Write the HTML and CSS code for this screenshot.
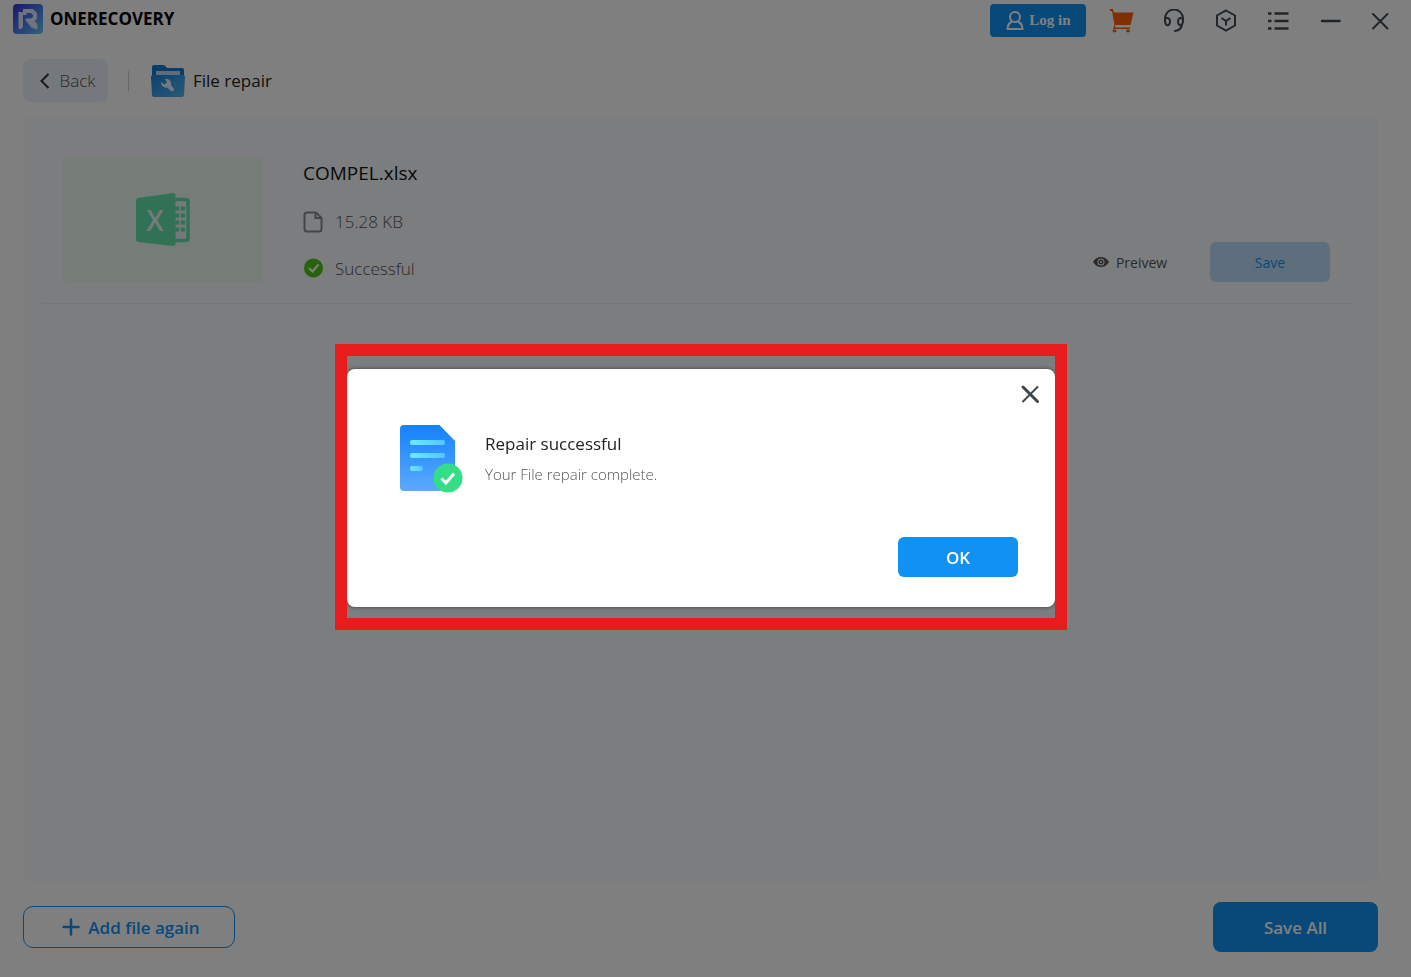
FILE: index.html
```html
<!DOCTYPE html>
<html lang="en">
<head>
  <meta charset="UTF-8">
  <title>OneRecovery - File repair</title>
  <meta name="viewport" content="width=device-width, initial-scale=1.0">
  <link rel="stylesheet" href="styles.css">
</head>
<body>

<div class="app">
  <header class="titlebar">
    <div class="brand">
      <svg class="brand-logo" viewBox="0 0 30 30" aria-hidden="true">
        <defs>
          <linearGradient id="logoBg" x1="0" y1="0" x2="1" y2="1">
            <stop offset="0" stop-color="#3230d8"/>
            <stop offset="0.5" stop-color="#4a7af0"/>
            <stop offset="1" stop-color="#5fc8f0"/>
          </linearGradient>
        </defs>
        <rect width="30" height="30" rx="4" fill="url(#logoBg)"/>
        <path d="M5.500 8 H10 V23 L7.500 25.500 L5.500 24 Z" fill="#dfe6fb"/>
        <path d="M10 5 H20 L24 9 V15 L21.500 17 L24.500 20 V25.500 L19 24 L12.500 16.500 V14.500 H18 L20 13 V11 L18 9 H13.500 V11 H10 Z" fill="#dfe6fb"/>
      </svg>
      <span class="brand-name">ONERECOVERY</span>
    </div>

    <div class="tools">
      <button class="login" type="button">
        <svg class="login-icon" viewBox="0 0 20 22" fill="none" stroke="#fff" stroke-width="2" aria-hidden="true">
          <circle cx="10" cy="7" r="5"/>
          <path d="M7 11.500 C4 13 2.500 16 2.500 19 H17.500 C17.500 16 16 13 13 11.500"/>
        </svg>
        Log in
      </button>
      <button class="icon-btn" type="button" aria-label="Buy">
        <svg viewBox="0 0 24 24" fill="#ff6000">
          <path d="M0 0 H3 L4 3.500 H23.500 L20.500 16 H5.500 L5 18.500 H20 V20 H3 L4.500 16 L2 2 H0 Z"/>
          <ellipse cx="4.500" cy="22" rx="2" ry="1.400"/>
          <ellipse cx="18" cy="22" rx="2" ry="1.400"/>
        </svg>
      </button>
      <button class="icon-btn" type="button" aria-label="Support">
        <svg viewBox="0 0 24 24" fill="none" stroke="#414b54" stroke-width="2" stroke-linecap="round">
          <path d="M3 12 V9.500 A9 9 0 0 1 21 9.500 V12"/>
          <path d="M3 10 C6 8 8 9.500 8 12.500 S6 17 4.500 16 C3 15 3 13 3 10 Z"/>
          <path d="M21 10 C18 8 16 9.500 16 12.500 S18 17 19.500 16 C21 15 21 13 21 10 Z"/>
          <path d="M20 15.500 C19.500 19 17 21.500 13 22"/>
        </svg>
      </button>
      <button class="icon-btn" type="button" aria-label="Products">
        <svg viewBox="0 0 24 24" fill="none" stroke="#414b54" stroke-width="2">
          <path d="M12 1.500 L21 6.500 V16.500 L12 21.500 L3 16.500 V6.500 Z"/>
          <path d="M7.500 9 L12 12 L16.500 9 M12 12 V16.500"/>
        </svg>
      </button>
      <button class="icon-btn" type="button" aria-label="Menu">
        <svg viewBox="0 0 24 24" fill="none" stroke="#414b54" stroke-width="2.500">
          <path d="M2 4.500 H5.500 M8.500 4.500 H22.500 M2 12 H5.500 M8.500 12 H22.500 M2 19.500 H5.500 M8.500 19.500 H22.500"/>
        </svg>
      </button>
      <button class="icon-btn" type="button" aria-label="Minimize">
        <svg viewBox="0 0 24 24" fill="none" stroke="#414b54" stroke-width="2.500" stroke-linecap="round">
          <path d="M4 12 H21.500"/>
        </svg>
      </button>
      <button class="icon-btn close" type="button" aria-label="Close">
        <svg viewBox="0 0 24 24" fill="none" stroke="#414b54" stroke-width="2" stroke-linecap="round">
          <path d="M5 5 L19.500 19.500 M19.500 5 L5 19.500"/>
        </svg>
      </button>
    </div>
  </header>

  <nav class="crumbs">
    <button class="back" type="button">
      <svg class="back-icon" viewBox="0 0 10 16" fill="none" stroke="#333" stroke-width="2" aria-hidden="true">
        <path d="M8.500 1 L1.500 8 L8.500 15"/>
      </svg>
      Back
    </button>
    <span class="divider"></span>
    <svg class="folder" viewBox="0 0 34 32" aria-hidden="true">
      <defs>
        <linearGradient id="folderBg" x1="0" y1="0" x2="1" y2="1">
          <stop offset="0" stop-color="#1c82d8"/>
          <stop offset="1" stop-color="#52b8f0"/>
        </linearGradient>
      </defs>
      <path d="M1 2 Q1 0 3 0 H12 Q14 0 15 2 L16 3 H31 Q33 3 33 5 V12 H1 Z" fill="#1478c8"/>
      <rect x="5" y="6" width="24" height="5" fill="#b8dcfa"/>
      <path d="M0 12 Q0 10 2 10 H32 Q34 10 34 12 L33 30 Q33 32 31 32 H3 Q1 32 1 30 Z" fill="url(#folderBg)"/>
      <path d="M14 14 A5 5 0 0 1 20 20 L23 24 Q23 27 20 26 L16 22.500 A5 5 0 0 1 10 17 L13.500 19.500 L16 17.500 Z" fill="#e6f3fe"/>
    </svg>
    <h1 class="page-title">File repair</h1>
  </nav>

  <main class="panel">
    <article class="file">
      <div class="thumb">
        <svg class="xls" viewBox="0 0 54 54" aria-hidden="true">
          <rect x="30" y="6.500" width="22" height="41" rx="2" fill="#ecf3f2" stroke="#62e3ab" stroke-width="3.500"/>
          <path d="M39 15.500 H49 M39 22.500 H49 M39 29.500 H49 M39 36.500 H49" stroke="#62e3ab" stroke-width="4"/>
          <path d="M44 9 V45" stroke="#ecf3f2" stroke-width="1.500"/>
          <path d="M2 5 L37 0 Q39.500 0 39.500 2 V51 Q39.500 53 37 53 L2 49 Q0 48.500 0 46.500 V7.500 Q0 5.500 2 5 Z" fill="#62e3ab"/>
          <text x="19" y="38" class="xls-letter">X</text>
        </svg>
      </div>
      <div class="info">
        <h2 class="file-name">COMPEL.xlsx</h2>
        <p class="meta">
          <svg class="meta-icon" viewBox="0 0 20 22" fill="none" stroke="#8a8a8a" stroke-width="2" aria-hidden="true">
            <path d="M4 1.500 H13 L18.500 7 V18 Q18.500 20.500 16 20.500 H4 Q1.500 20.500 1.500 18 V4 Q1.500 1.500 4 1.500 Z"/>
            <path d="M12.500 1.500 V7 H18.500"/>
          </svg>
          15.28 KB
        </p>
        <p class="meta">
          <svg class="meta-icon" viewBox="0 0 20 22" aria-hidden="true">
            <circle cx="10.500" cy="10" r="9.500" fill="#52c41a"/>
            <path d="M6 10 L9.500 13.500 L15.500 6.500" fill="none" stroke="#fff" stroke-width="2"/>
          </svg>
          Successful
        </p>
      </div>
      <div class="actions">
        <button class="preview" type="button">
          <svg class="eye" viewBox="0 0 16 12" aria-hidden="true">
            <path d="M0 6 Q3 1 8 1 T16 6 Q13 11 8 11 T0 6 Z" fill="#555"/>
            <circle cx="8" cy="6" r="3.500" fill="#fff"/>
            <circle cx="8" cy="6" r="2.500" fill="#555"/>
            <circle cx="8" cy="6" r="1" fill="#fff"/>
          </svg>
          Preivew
        </button>
        <button class="save" type="button">Save</button>
      </div>
    </article>
  </main>

  <footer class="footer">
    <button class="add" type="button">
      <svg class="plus" viewBox="0 0 18 18" stroke="#1192f3" stroke-width="2.500" stroke-linecap="round" aria-hidden="true">
        <path d="M9 1.500 V16.500 M1.500 9 H16.500"/>
      </svg>
      Add file again
    </button>
    <button class="save-all" type="button">Save All</button>
  </footer>
</div>

<!-- Result dialog over the dimmed window -->
<div class="overlay">
  <div class="frame">
    <section class="dialog" role="dialog" aria-labelledby="dialog-title">
      <button class="dialog-close" type="button" aria-label="Close">
        <svg viewBox="0 0 20 20" fill="none" stroke="#3d464d" stroke-linecap="round">
          <path d="M3 3 L17.500 17.500" stroke-width="3"/>
          <path d="M17.500 3 L3 17.500" stroke-width="2"/>
        </svg>
      </button>
      <div class="dialog-body">
        <svg class="doc" viewBox="0 0 63 68" aria-hidden="true">
          <defs>
            <linearGradient id="docBg" x1="0" y1="0" x2="0" y2="1">
              <stop offset="0" stop-color="#1482fc"/>
              <stop offset="1" stop-color="#5ca9fd"/>
            </linearGradient>
            <linearGradient id="lineBg" x1="0" y1="0" x2="1" y2="0">
              <stop offset="0" stop-color="#6cecff"/>
              <stop offset="1" stop-color="#55c4ff"/>
            </linearGradient>
          </defs>
          <path d="M4 0 H39.500 L55 16 V62 Q55 66 51 66 H4 Q0 66 0 62 V4 Q0 0 4 0 Z" fill="url(#docBg)"/>
          <g fill="url(#lineBg)">
            <rect x="10" y="15" width="35" height="5" rx="2"/>
            <rect x="10" y="28" width="35" height="5" rx="2"/>
            <rect x="10" y="41" width="13" height="5" rx="2"/>
          </g>
          <circle cx="48" cy="53" r="14.500" fill="#33de86"/>
          <path d="M41.500 53.500 L46 58 L54 48.500" fill="none" stroke="#fff" stroke-width="3"/>
        </svg>
        <div class="dialog-text">
          <h2 class="dialog-title" id="dialog-title">Repair successful</h2>
          <p class="dialog-note">Your File repair complete.</p>
        </div>
      </div>
      <button class="ok" type="button">OK</button>
    </section>
  </div>
</div>

</body>
</html>
```
FILE: styles.css
```css
* {
  box-sizing: border-box;
  margin: 0;
  padding: 0;
}
body {
  font-family: "Open Sans", "Noto Sans", sans-serif;
  background: #fff;
  color: #222;
}
button {
  font-family: inherit;
  border: none;
  background: none;
  cursor: pointer;
}
svg {
  display: block;
  flex: none;
}

.app {
  min-height: 100vh;
  display: flex;
  flex-direction: column;
}

/* title bar */
.titlebar {
  display: flex;
  justify-content: space-between;
  align-items: flex-start;
  padding: 4px 19px 0 13px;
}
.brand {
  display: flex;
  align-items: center;
  gap: 7px;
}
.brand-logo {
  width: 30px;
  height: 30px;
}
.brand-name {
  font-size: 17px;
  font-weight: 700;
  line-height: 30px;
  color: #000;
}
.tools {
  display: flex;
  align-items: center;
  gap: 28px;
}
.login {
  display: flex;
  align-items: center;
  justify-content: center;
  gap: 4px;
  width: 96px;
  height: 33px;
  margin-right: -4px;
  border-radius: 4px;
  background: #1192f3;
  color: #fff;
  font-family: "Liberation Serif", serif;
  font-size: 15px;
  font-weight: 700;
}
.login-icon {
  width: 20px;
  height: 22px;
}
.icon-btn {
  width: 24px;
  height: 24px;
}
.close {
  margin-left: -2px;
}

/* back + page title */
.crumbs {
  display: flex;
  align-items: center;
  margin-top: 22px;
  padding: 0 33px 0 23px;
}
.back {
  display: flex;
  align-items: center;
  justify-content: center;
  gap: 10px;
  width: 85px;
  height: 43px;
  padding-left: 4px;
  border-radius: 8px;
  background: #eaf0fa;
  color: #555;
  font-size: 17px;
  font-weight: 300;
}
.back-icon {
  width: 10px;
  height: 16px;
}
.divider {
  width: 1px;
  height: 20px;
  margin: 0 22px 0 20px;
  background: #ccd0dc;
}
.folder {
  width: 34px;
  height: 32px;
}
.page-title {
  margin-left: 8px;
  font-size: 17px;
  font-weight: 500;
}

/* file list */
.panel {
  flex: 1;
  margin: 14px 33px 0 23px;
  padding: 41px 26px 0 19px;
  border-radius: 8px;
  background: #f8fafe;
}
.file {
  display: flex;
  padding: 0 22px 18px 21px;
  border-bottom: 1px solid #ebebf8;
}
.thumb {
  display: flex;
  align-items: center;
  justify-content: center;
  width: 200px;
  height: 125px;
  border-radius: 5px;
  background: #ecf9f0;
}
.xls {
  width: 54px;
  height: 54px;
}
.xls-letter {
  font-family: "Open Sans", sans-serif;
  font-size: 28px;
  font-weight: 600;
  text-anchor: middle;
  fill: #ecf3f2;
}
.info {
  flex: 1;
  margin-left: 40px;
}
.file-name {
  margin-bottom: 17px;
  font-size: 19px;
  font-weight: 500;
  line-height: 32px;
  color: #111;
}
.meta {
  display: flex;
  align-items: center;
  gap: 12px;
  margin-bottom: 15px;
  font-size: 17px;
  font-weight: 300;
  line-height: 32px;
  color: #555;
}
.meta:last-child {
  margin-bottom: 0;
}
.meta-icon {
  width: 20px;
  height: 22px;
}
.actions {
  display: flex;
  align-items: flex-end;
  gap: 20px;
  padding-bottom: 3px;
}
.preview,
.save {
  display: flex;
  align-items: center;
  justify-content: center;
  gap: 7px;
  width: 120px;
  height: 40px;
  border-radius: 6px;
  font-size: 14px;
}
.preview {
  background: #f9fbff;
  color: #555;
}
.save {
  background: #bcddfb;
  color: #1192f3;
  font-weight: 500;
}
.eye {
  width: 16px;
  height: 12px;
}

/* bottom buttons */
.footer {
  display: flex;
  align-items: center;
  justify-content: space-between;
  padding: 20px 33px 25px 23px;
}
.add {
  display: flex;
  align-items: center;
  justify-content: center;
  gap: 8px;
  width: 212px;
  height: 42px;
  padding-left: 4px;
  border: 1px solid #1192f3;
  border-radius: 10px;
  color: #1192f3;
  font-size: 17px;
  font-weight: 600;
}
.plus {
  width: 18px;
  height: 18px;
}
.save-all {
  width: 165px;
  height: 50px;
  border-radius: 8px;
  background: #1192f3;
  color: #fff;
  font-size: 17px;
  font-weight: 600;
}

/* dialog */
.overlay {
  position: fixed;
  inset: 0;
  display: flex;
  align-items: center;
  justify-content: center;
  padding: 0 9px 3px 0;
  background: rgba(0, 0, 0, 0.5);
}
.frame {
  width: 732px;
  max-width: 100%;
  padding: 13px 0 11px;
  border: 12px solid #e81c1c;
  overflow: hidden;
}
.dialog {
  display: flex;
  flex-direction: column;
  padding: 15px 37px 30px 53px;
  border-radius: 8px;
  background: #fff;
  box-shadow: 0 0 4px rgba(0, 0, 0, 0.5);
}
.dialog-close {
  align-self: flex-end;
  width: 20px;
  height: 20px;
  margin-right: -22px;
}
.dialog-body {
  display: flex;
  align-items: flex-start;
  gap: 22px;
  margin-top: 21px;
}
.doc {
  width: 63px;
  height: 68px;
}
.dialog-title {
  margin-top: 5px;
  font-size: 17px;
  font-weight: 500;
  line-height: 28px;
}
.dialog-note {
  margin-top: 2px;
  font-size: 15px;
  font-weight: 300;
  line-height: 28px;
  color: #555;
}
.ok {
  align-self: flex-end;
  width: 120px;
  height: 40px;
  margin-top: 44px;
  border-radius: 6px;
  background: #1192f3;
  color: #fff;
  font-size: 17px;
  font-weight: 600;
}
```
